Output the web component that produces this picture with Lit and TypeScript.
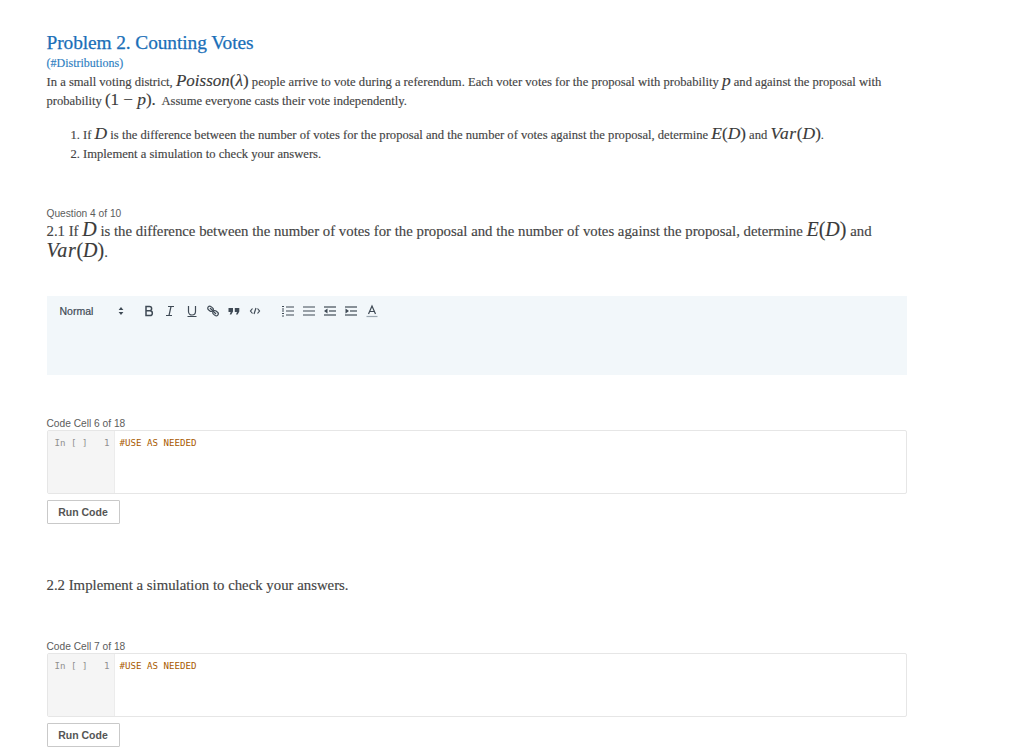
import { LitElement, html, css, svg } from "lit";
import { customElement } from "lit/decorators.js";

const ic = (body: unknown, w = 14) => html`<svg class="ic" width=${w} height="14" viewBox="0 0 14 14" fill="none" stroke="#3f4a55" stroke-width="1.2">${body}</svg>`;

@customElement("app-root")
export class AppRoot extends LitElement {
  static styles = css`
    :host { display: block; width: 1024px; height: 756px; overflow: hidden; background: #fff; box-sizing: border-box; padding: 32px 117px 0 46.5px; font-family: "Liberation Serif", serif; color: #444; }
    h1 { margin: 0; font-size: 19.4px; line-height: 22px; font-weight: 400; color: #1a6fb8; letter-spacing: -0.1px; -webkit-text-stroke: 0.25px #1a6fb8; }
    .tag { margin-top: 2px; font-size: 12px; line-height: 14px; color: #2f80c2; -webkit-text-stroke: 0.15px #2f80c2; }
    .p { margin: 0; font-size: 12.6px; line-height: 19px; -webkit-text-stroke: 0.15px #444; }
    .p.top { margin-top: 3px; }
    ol { margin: 15px 0 0; padding: 0 0 0 36.5px; font-size: 12.6px; line-height: 19px; -webkit-text-stroke: 0.15px #444; }
    .m { font-family: "Liberation Serif", serif; font-style: italic; font-size: 17.5px; line-height: 0; color: #3a3a3a; }
    .m.w { letter-spacing: 0.7px; }
    .mr { font-family: "Liberation Serif", serif; font-size: 17px; line-height: 0; color: #3a3a3a; }
    .m.tight { font-size: 17px; }
    .meta { font-family: "Liberation Sans", sans-serif; font-size: 10.2px; line-height: 14px; color: #5c5c5c; }
    .q4 { margin-top: 43px; }
    .q { margin: 0; font-size: 14.8px; line-height: 21px; color: #444; -webkit-text-stroke: 0.15px #444; }
    .q .m, .q .mr { font-size: 20px; }
    .editor { margin-top: 33px; height: 79px; background: #f2f7fa; box-sizing: border-box; padding: 7px 13px; }
    .toolbar { display: flex; align-items: center; height: 16px; color: #3f4a55; }
    .normal { font-family: "Liberation Sans", sans-serif; font-size: 10.5px; font-weight: 400; width: 58px; color: #3f4a55; -webkit-text-stroke: 0.2px #3f4a55; }
    .sel { width: 6px; margin-right: 18.5px; display: flex; }
    .tools { display: flex; gap: 7.3px; align-items: center; }
    .tools.two { margin-left: 19px; gap: 7px; }
    .ic { display: block; }
    .c1 { margin-top: 42px; }
    .c1 .meta, .c2 .meta { margin-bottom: -1px; }
    .cell { display: flex; height: 64px; box-sizing: border-box; border: 1px solid #e6e6e6; border-radius: 2px; font-family: "DejaVu Sans Mono", monospace; font-size: 9.15px; line-height: 14px; background: #fff; }
    .gut { width: 67px; flex: none; background: #f5f5f5; border-right: 1px solid #ececec; display: flex; justify-content: space-between; padding: 5px 4px 0 7px; box-sizing: border-box; color: #8f8f8f; white-space: pre; }
    .code { padding: 5px 0 0 5px; color: #a85a00; }
    .run { display: block; margin-top: 6px; width: 73px; height: 24px; box-sizing: border-box; background: #fff; border: 1px solid #c9c9c9; border-radius: 1px; padding: 0; font-family: "Liberation Sans", sans-serif; font-size: 10.5px; font-weight: 700; color: #555; }
    .q22 { margin-top: 51px; }
    .c2 { margin-top: 44px; }
  `;

  private cell(n: number) {
    return html`<div class="meta">Code Cell ${n} of 18</div>
      <div class="cell"><div class="gut"><span>In [ ]</span><span>1</span></div><div class="code">#USE AS NEEDED</div></div>
      <button class="run">Run Code</button>`;
  }

  render() {
    const lines = (ys: number[]) => svg`${ys.map((y) => svg`<path d="M1 ${y}h12"/>`)}`;
    return html`
      <h1>Problem 2. Counting Votes</h1>
      <div class="tag">(#Distributions)</div>
      <p class="p top">In a small voting district, <span class="m tight">Poisson</span><span class="mr">(</span><span class="m">λ</span><span class="mr">)</span> people arrive to vote during a referendum. Each voter votes for the proposal with probability <span class="m">p</span> and against the proposal with probability <span class="mr">(1 − </span><span class="m">p</span><span class="mr">).</span>&nbsp; Assume everyone casts their vote independently.</p>
      <ol>
        <li>If <span class="m">D</span> is the difference between the number of votes for the proposal and the number of votes against the proposal, determine <span class="m">E</span><span class="mr">(</span><span class="m">D</span><span class="mr">)</span> and <span class="m w">Var</span><span class="mr">(</span><span class="m">D</span><span class="mr">)</span>.</li>
        <li>Implement a simulation to check your answers.</li>
      </ol>
      <div class="meta q4">Question 4 of 10</div>
      <p class="q">2.1 If <span class="m">D</span> is the difference between the number of votes for the proposal and the number of votes against the proposal, determine <span class="m">E</span><span class="mr">(</span><span class="m">D</span><span class="mr">)</span> and <span class="m w">Var</span><span class="mr">(</span><span class="m">D</span><span class="mr">)</span>.</p>
      <div class="editor">
        <div class="toolbar">
          <span class="normal">Normal</span>
          <span class="sel"><svg width="6" height="10" viewBox="0 0 6 10" fill="#3f4a55"><path d="M3 1l2.400 3H.6zM3 9L.6 6h4.800z"/></svg></span>
          <div class="tools">
            ${ic(svg`<path stroke-width="1.500" d="M4 2.500h3.500a2 2 0 010 4.300H4zM4 6.800h4a2.200 2.200 0 010 4.700H4z"/>`)}
            ${ic(svg`<path d="M5 2.500h6M3 11.500h6M8 2.500l-2 9"/>`)}
            ${ic(svg`<path d="M3.500 2v5.500a3.500 3.500 0 007 0V2M2.500 12.500h9"/>`)}
            ${ic(svg`<rect x="1.500" y="2.800" width="6" height="4" rx="2" transform="rotate(40 4.500 4.800)"/><rect x="6.500" y="7.200" width="6" height="4" rx="2" transform="rotate(40 9.500 9.200)"/><path d="M4 4l6 6"/>`)}
            ${ic(svg`<path stroke="none" fill="#3f4a55" d="M1.500 4h4.500v3.500L4.300 10.500H2.700L3.700 8H1.500zM7.800 4h4.500v3.500L10.600 10.500H9L10 8H7.800z"/>`)}
            ${ic(svg`<path d="M4.500 4.500L2.500 7l2 2.500M9.500 4.500L11.500 7l-2 2.500M8 4l-2 6"/>`)}
          </div>
          <div class="tools two">
            ${ic(svg`<path d="M5 3h8M5 7h8M5 11h8"/><path stroke-width="1" d="M1 2.500h2M1 5h2M1 7h2M1 9.500h2M1 12h2"/>`)}
            ${ic(svg`<path d="M1 3h12M1 7h12M1 11h12"/>`)}
            ${ic(svg`${lines([3, 11])}<path d="M6 7h7"/><path stroke="none" fill="#3f4a55" d="M1 7l3.500-2.500v5z"/>`)}
            ${ic(svg`${lines([3, 11])}<path d="M6 7h7"/><path stroke="none" fill="#3f4a55" d="M5 7L1.500 4.500v5z"/>`)}
            ${ic(svg`<path d="M3.500 10L7 2l3.500 8M4.800 7.500h4.400"/><path stroke="#9aa7b0" d="M1.500 12.500h11"/>`)}
          </div>
        </div>
      </div>
      <div class="c1">${this.cell(6)}</div>
      <p class="q q22">2.2 Implement a simulation to check your answers.</p>
      <div class="c2">${this.cell(7)}</div>
    `;
  }
}
